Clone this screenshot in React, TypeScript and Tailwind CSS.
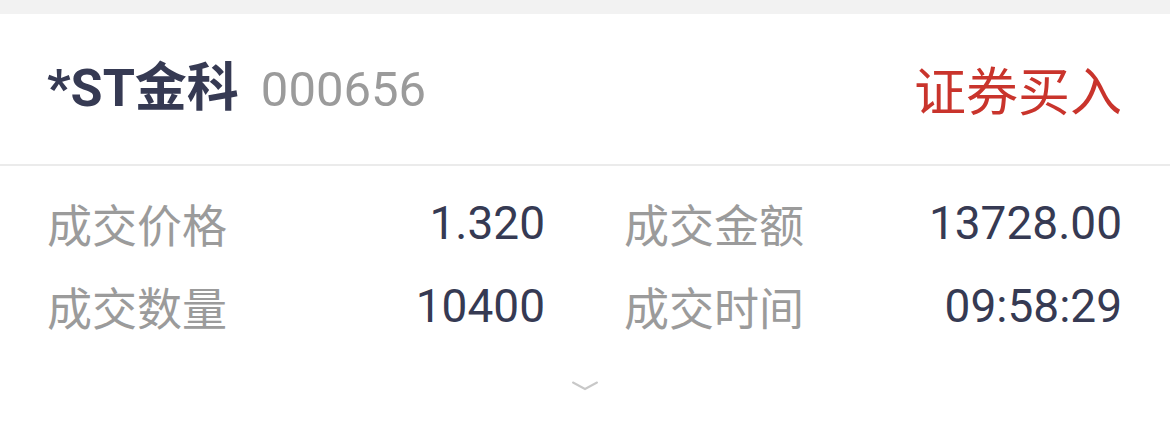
import React from 'react'

const cjk = '"Noto Sans CJK SC", sans-serif'
const mixed = 'Roboto, "Noto Sans CJK SC", sans-serif'

interface Field {
  label: string
  value: string
}

const left: Field[] = [
  { label: '成交价格', value: '1.320' },
  { label: '成交数量', value: '10400' },
]

const right: Field[] = [
  { label: '成交金额', value: '13728.00' },
  { label: '成交时间', value: '09:58:29' },
]

function FieldRow({ field }: { field: Field }) {
  return (
    <div className="flex h-[83px] items-center justify-between">
      <span className="text-[45px] text-[#9b9b9b]" style={{ fontFamily: cjk }}>
        {field.label}
      </span>
      <span className="text-[46px] text-[#363a53]" style={{ fontFamily: mixed }}>
        {field.value}
      </span>
    </div>
  )
}

export default function App() {
  return (
    <div className="h-[423px] w-[1170px] overflow-hidden bg-[#f2f2f2]">
      <div className="mt-[14px] h-[409px] bg-white">
        <div className="flex h-[150px] items-center justify-between pl-[47px] pr-[48px]">
          <div className="flex items-center">
            <span
              className="text-[52px] font-bold leading-none text-[#363a53]"
              style={{ fontFamily: mixed }}
            >
              *ST金科
            </span>
            <span
              className="ml-[22px] text-[49px] leading-none text-[#9b9b9b]"
              style={{ fontFamily: mixed }}
            >
              000656
            </span>
          </div>
          <span className="text-[52px] leading-none text-[#c9342c]" style={{ fontFamily: cjk }}>
            证券买入
          </span>
        </div>
        <div className="h-[2px] bg-[#ebebeb]" />
        <div className="grid grid-cols-2 gap-x-[79px] pl-[47px] pr-[48px] pt-[16px]">
          <div>
            {left.map((f) => (
              <FieldRow key={f.label} field={f} />
            ))}
          </div>
          <div>
            {right.map((f) => (
              <FieldRow key={f.label} field={f} />
            ))}
          </div>
        </div>
        <div className="flex justify-center pt-[33px]">
          <svg width="26" height="10" viewBox="0 0 26 10" fill="none" className="ml-[-1px]">
            <path d="M1 1.5 L13 8 L25 1.5" stroke="#c8c8c8" strokeWidth="2" strokeLinecap="round" />
          </svg>
        </div>
      </div>
    </div>
  )
}
